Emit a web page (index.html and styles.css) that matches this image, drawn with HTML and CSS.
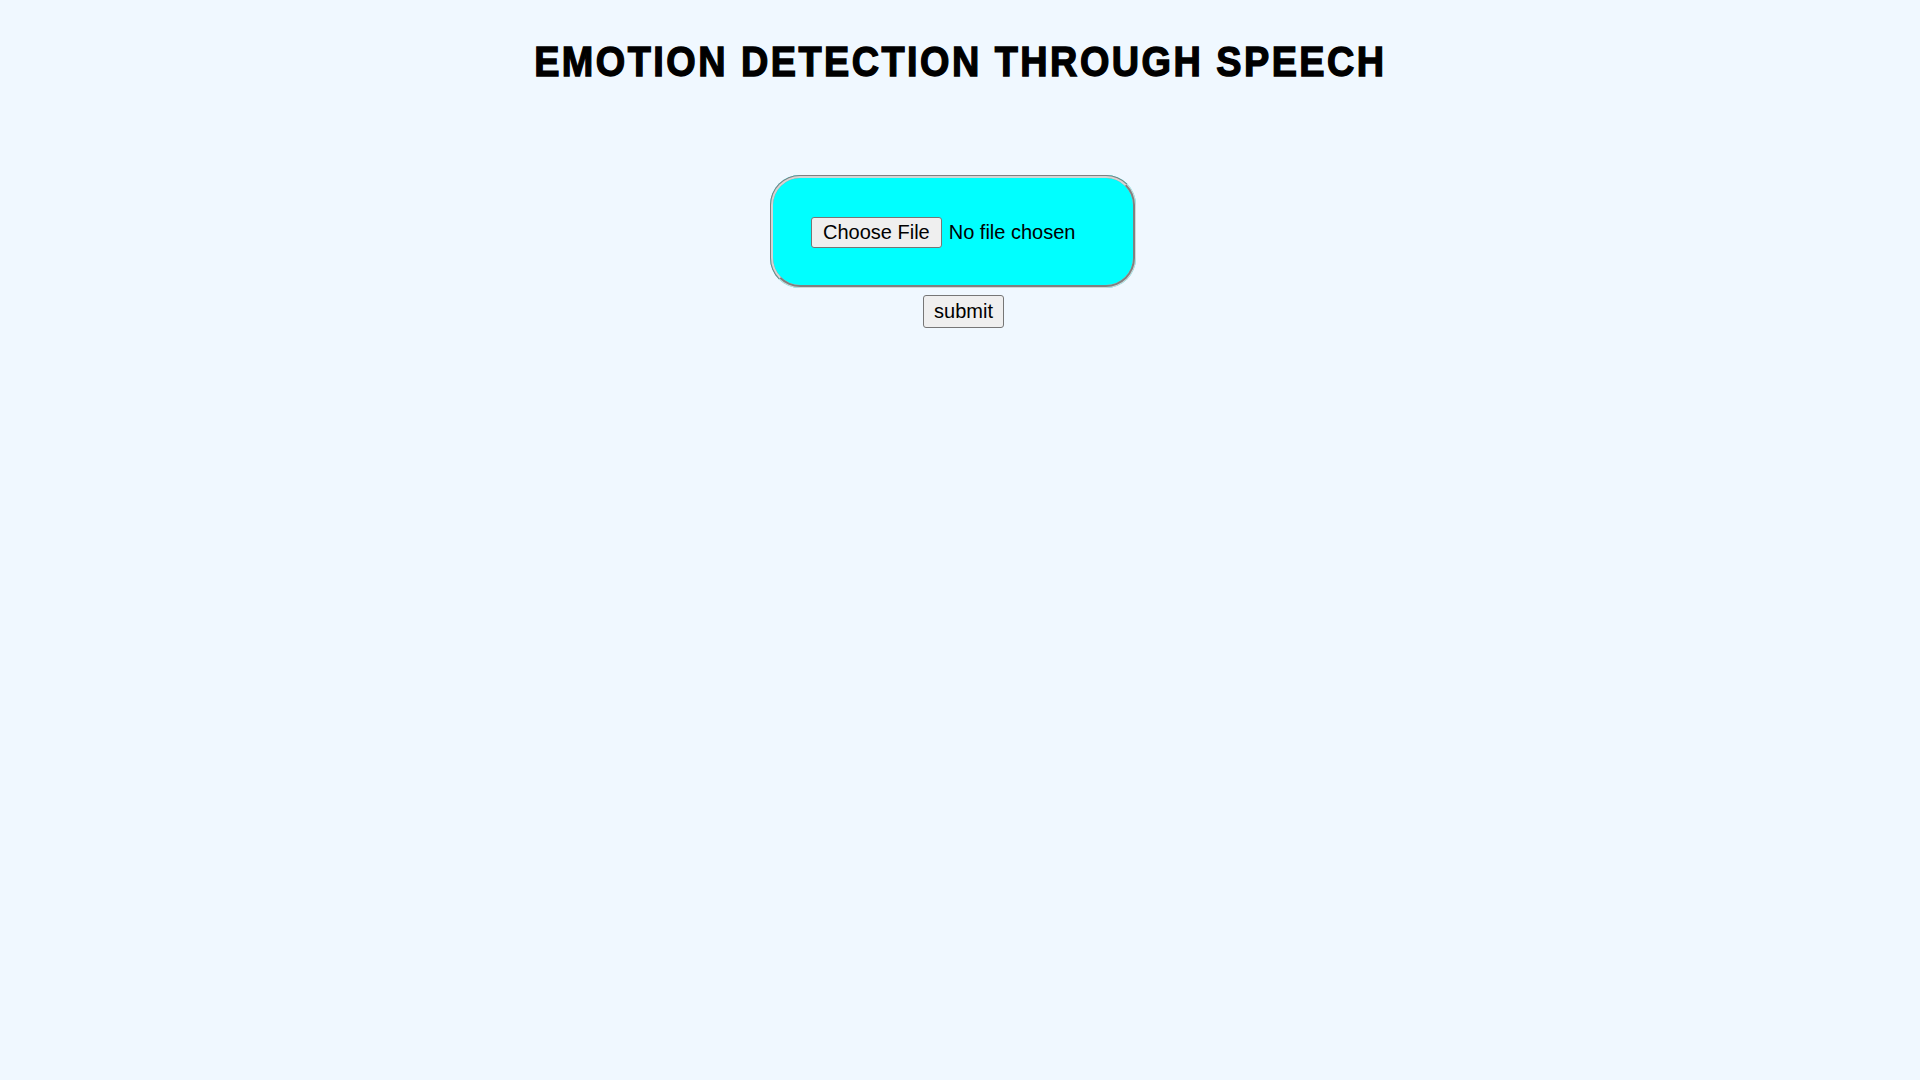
FILE: index.html
```html
<!DOCTYPE html>
<html lang="en">
<head>
<meta charset="utf-8">
<title>Emotion Detection Through Speech</title>
<link rel="stylesheet" href="styles.css">
</head>
<body>
  <h1 class="title"><span class="title-text">EMOTION DETECTION THROUGH SPEECH</span></h1>
  <form class="upload-form">
    <fieldset class="upload-box">
      <label class="file-picker">
        <input class="file-input" type="file" name="file">
        <span class="file-btn">Choose File</span>
        <span class="file-name">No file chosen</span>
      </label>
    </fieldset>
    <button class="submit-btn" type="button">submit</button>
  </form>
</body>
</html>
```

FILE: styles.css
```css
html, body {
  margin: 0;
  padding: 0;
}

body {
  background: #f0f8ff;
  color: #000;
  font-family: "Liberation Sans", Arial, sans-serif;
  min-height: 1080px;
}

.title {
  margin: 35px 0 0;
  font-family: "Liberation Sans", Arial, sans-serif;
  font-weight: bold;
  font-size: 43px;
  line-height: 52px;
  text-align: center;
}

.title-text {
  display: inline-block;
  letter-spacing: 2.8px;
  -webkit-text-stroke: 1.4px #000;
  transform: scaleX(0.88);
  transform-origin: center;
  white-space: nowrap;
}

.upload-form {
  display: flex;
  flex-direction: column;
  align-items: center;
  margin-top: 88px;
}

.upload-box {
  box-sizing: border-box;
  width: 366px;
  min-width: 0;
  margin: 0 14px 0 0;
  padding: 39px 38px 37px;
  border: 3px groove #d4d4d4;
  border-radius: 30px;
  background: #00ffff;
}

.file-picker {
  display: flex;
  align-items: center;
  gap: 7px;
  font-size: 20px;
  line-height: 23px;
  cursor: pointer;
}

.file-input {
  display: none;
}

.file-btn {
  display: block;
  padding: 3px 11px;
  border: 1px solid #767676;
  border-radius: 3px;
  background: #efefef;
  color: #000;
  white-space: nowrap;
}

.file-name {
  white-space: nowrap;
}

.submit-btn {
  margin: 7px 0 0 7px;
  padding: 4px 10px;
  font-family: "Liberation Sans", Arial, sans-serif;
  font-size: 20px;
  line-height: 23px;
  color: #000;
  background: #efefef;
  border: 1px solid #767676;
  border-radius: 3px;
}
```
